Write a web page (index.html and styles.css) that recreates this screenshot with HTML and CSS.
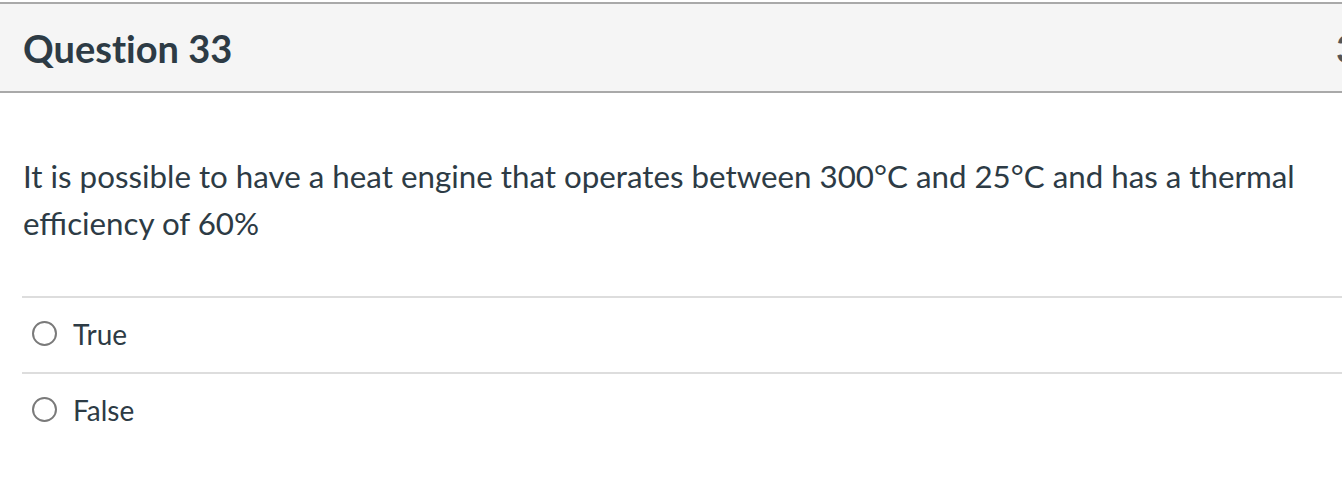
FILE: index.html
```html
<!DOCTYPE html>
<html lang="en">
<head>
<meta charset="utf-8">
<title>Question 33</title>
<link rel="stylesheet" href="styles.css">
</head>
<body>
<div class="question">
  <div class="header">
    <h2 class="title">Question 33</h2>
    <span class="points">3 pts</span>
  </div>
  <div class="content">
    <p class="text">It is possible to have a heat engine that operates between 300°C and 25°C and has a thermal efficiency of 60%</p>
    <div class="answers">
      <label class="answer"><span class="radio"></span><span class="label">True</span></label>
      <label class="answer"><span class="radio"></span><span class="label">False</span></label>
    </div>
  </div>
</div>
</body>
</html>
```
FILE: styles.css
```css
html, body {
  margin: 0;
  padding: 0;
  background: #fff;
  overflow: hidden;
}
body {
  font-family: Lato, "Open Sans", sans-serif;
  color: #2d3b45;
}
.question {
  width: 1500px;
  padding-top: 2px;
}
.header {
  display: grid;
  grid-template-columns: 1313px auto;
  align-items: center;
  height: 87px;
  padding-left: 23px;
  background: #f5f5f5;
  border-top: 2px solid #a9a9a9;
  border-bottom: 2px solid #a9a9a9;
}
.title {
  margin: 0;
  font-size: 38px;
  font-weight: 700;
  font-variant-ligatures: none;
}
.points {
  font-size: 38px;
  font-weight: 700;
  color: #555;
}
.content {
  padding: 0 0 0 22px;
}
.text {
  margin: 60px 0 0 1px;
  width: 1300px;
  font-size: 31.3px;
  line-height: 47px;
}
.answers {
  margin-top: 49px;
  width: 1320px;
}
.answer {
  display: flex;
  align-items: center;
  height: 71px;
  padding-bottom: 3px;
  border-top: 2px solid #dddddd;
  font-size: 28px;
}
.radio {
  width: 25px;
  height: 25px;
  margin-left: 10px;
  margin-right: 16px;
  border: 2px solid #7a7a7a;
  border-radius: 50%;
  box-sizing: border-box;
}
```
